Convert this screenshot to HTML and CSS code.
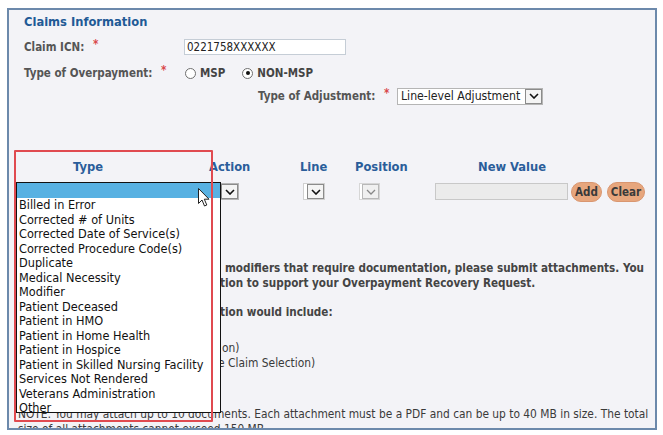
FILE: index.html
```html
<!DOCTYPE html>
<html>
<head>
<meta charset="utf-8">
<link rel="stylesheet" href="styles.css">
</head>
<body>
<div class="panel">
  <h2 class="section-title">Claims Information</h2>
  <div class="form-row r1">
    <span class="lbl w-icn">Claim ICN: <span class="req">*</span></span>
    <input class="text-in" type="text" value="0221758XXXXXX">
  </div>
  <div class="form-row r2">
    <span class="lbl w-ovp">Type of Overpayment: <span class="req">*</span></span>
    <span class="radio"><span class="circle"></span><span class="rlbl">MSP</span></span>
    <span class="radio"><span class="circle on"></span><span class="rlbl">NON-MSP</span></span>
  </div>
  <div class="form-row r3">
    <span class="lbl w-adj">Type of Adjustment: <span class="req">*</span></span>
    <span class="sel adj-sel"><span class="sel-text">Line-level Adjustment</span><span class="arrow"><svg viewBox="0 0 10 6" width="10" height="6"><path d="M1 1 L5 5 L9 1" fill="none" stroke="#111" stroke-width="1.6"/></svg></span></span>
  </div>

  <div class="lines">
    <div class="hdr c-type">Type</div>
    <div class="hdr c-action">Action</div>
    <div class="hdr c-line">Line</div>
    <div class="hdr c-pos">Position</div>
    <div class="hdr c-new">New Value</div>
    <div class="hdr"></div>

    <div class="cell"></div>
    <div class="cell"><span class="sel mini action-sel"><span class="arrow"><svg viewBox="0 0 10 6" width="10" height="6"><path d="M1 1 L5 5 L9 1" fill="none" stroke="#111" stroke-width="1.6"/></svg></span></span></div>
    <div class="cell"><span class="sel mini line-sel"><span class="arrow"><svg viewBox="0 0 10 6" width="10" height="6"><path d="M1 1 L5 5 L9 1" fill="none" stroke="#111" stroke-width="1.6"/></svg></span></span></div>
    <div class="cell"><span class="sel mini pos-sel dis"><span class="arrow"><svg viewBox="0 0 10 6" width="10" height="6"><path d="M1 1 L5 5 L9 1" fill="none" stroke="#888" stroke-width="1.3"/></svg></span></span></div>
    <div class="cell"><input class="new-in" type="text" disabled></div>
    <div class="cell btns"><button class="pill">Add</button><button class="pill">Clear</button></div>
  </div>

  <div class="info">
    <p class="bold"><span class="ln"><span class="pre p1">For line-level adjustments with</span>modifiers that require documentation, please submit attachments. You</span><span class="ln"><span class="pre p2">may attach additional documenta</span>tion to support your Overpayment Recovery Request.</span></p>
    <p class="bold"><span class="ln"><span class="pre p3">Examples of such documenta</span>tion would include:</span></p>
    <p class="list"><span class="ln"><span class="pre p4">- Medical records (Line Selecti</span>on)</span><span class="ln"><span class="pre p5">- Remittance Advice (Entir</span>e Claim Selection)</span></p>
    <p class="note">NOTE: You may attach up to 10 documents. Each attachment must be a PDF and can be up to 40 MB in size. The total<br>size of all attachments cannot exceed 150 MB.</p>
  </div>

  <div class="dropdown">
    <div class="opt sel-opt">&nbsp;</div>
    <div class="opt">Billed in Error</div>
    <div class="opt">Corrected # of Units</div>
    <div class="opt">Corrected Date of Service(s)</div>
    <div class="opt">Corrected Procedure Code(s)</div>
    <div class="opt">Duplicate</div>
    <div class="opt">Medical Necessity</div>
    <div class="opt">Modifier</div>
    <div class="opt">Patient Deceased</div>
    <div class="opt">Patient in HMO</div>
    <div class="opt">Patient in Home Health</div>
    <div class="opt">Patient in Hospice</div>
    <div class="opt">Patient in Skilled Nursing Facility</div>
    <div class="opt">Services Not Rendered</div>
    <div class="opt">Veterans Administration</div>
    <div class="opt">Other</div>
  </div>
  <div class="callout"></div>
  <svg class="pointer" viewBox="0 0 12 19" width="12" height="19"><path d="M0.5 0.5 L0.5 15.5 L4 12 L6.5 18 L8.8 17 L6.3 11.2 L11 11.2 Z" fill="#fff" stroke="#222" stroke-width="1" stroke-linejoin="round"/></svg>
</div>
</body>
</html>
```
FILE: styles.css
```css
html, body { margin: 0; padding: 0; background: #ffffff; }
body {
  font-family: "DejaVu Sans Condensed", "DejaVu Sans", sans-serif;
  font-size: 12px;
  color: #3a3a3a;
}
.panel {
  position: relative;
  box-sizing: border-box;
  margin: 8px 0 0 7px;
  width: 650px;
  height: 422px;
  border: 2px solid #6c89ab;
  background: #f3f3f7;
  padding: 4px 0 0 7px;
  overflow: hidden;
}
.section-title {
  margin: 0 0 4px 8px;
  font-size: 12.8px;
  line-height: 16px;
  font-weight: bold;
  color: #1f5a96;
}
.form-row {
  display: flex;
  align-items: center;
  height: 26px;
  padding-left: 8px;
}
.r3 { height: 20px; padding-left: 242px; }
.lbl { font-weight: bold; color: #555; font-size: 11.5px; }
.req { color: #d9484a; margin-left: 5px; position: relative; top: -3px; }
.w-icn { width: 160px; }
.w-ovp { width: 161px; }
.w-adj { width: 139px; }
.text-in {
  box-sizing: border-box;
  width: 162px;
  height: 16px;
  border: 1px solid #c5cdd6;
  background: #fff;
  font-family: "DejaVu Sans Condensed", sans-serif;
  font-size: 11.5px;
  color: #222;
  padding: 0 2px;
  margin: 0;
  outline: none;
}
.radio { display: inline-flex; align-items: center; margin-right: 17px; }
.circle {
  box-sizing: border-box;
  width: 11px; height: 11px;
  border: 1px solid #6f6f6f;
  border-radius: 50%;
  background: #fff;
  margin-right: 4px;
  position: relative;
}
.circle.on::after {
  content: "";
  position: absolute;
  left: 2.5px; top: 2.5px;
  width: 4px; height: 4px;
  border-radius: 50%;
  background: #111;
}
.rlbl { font-weight: bold; color: #444; font-size: 11.5px; }

.sel {
  box-sizing: border-box;
  display: inline-flex;
  align-items: stretch;
  height: 17px;
  border: 1px solid #b5b5b5;
  background: #fff;
}
.sel-text { padding: 0 1px 0 3px; line-height: 15px; color: #222; font-size: 12.2px; }
.arrow {
  box-sizing: border-box;
  width: 17px;
  border: 1px solid #8b8b8b;
  background: #f4f4f4;
  display: flex;
  align-items: center;
  justify-content: center;
}
.adj-sel { width: 146px; justify-content: space-between; }

.lines {
  display: grid;
  grid-template-columns: 184px 95px 55px 80px 140px auto;
  margin-top: 53px;
}
.hdr {
  font-weight: bold;
  font-size: 12.8px;
  color: #2a5d9a;
  line-height: 16px;
  height: 16px;
}
.c-type { text-align: center; width: 144px; }
.c-action { padding-left: 9px; }
.c-line { padding-left: 5px; }
.c-pos { padding-left: 5px; }
.c-new { padding-left: 48px; }
.cell { margin-top: 7px; height: 19px; display: flex; align-items: center; }
.mini { justify-content: flex-end; }
.action-sel { width: 39px; }
.line-sel { width: 22px; margin-left: 8px; border-color: #d0d0d0; }
.pos-sel { width: 21px; margin-left: 9px; border-color: #d6d6d6; }
.pos-sel .arrow { border-color: #b8b8b8; background: #f0f0f0; }
.new-in {
  box-sizing: border-box;
  width: 133px;
  height: 17px;
  margin: 0 0 0 5px;
  border: 1px solid #c8c8c8;
  background: #ebebeb;
}
.btns { gap: 5px; padding-left: 1px; }
.pill {
  box-sizing: border-box;
  height: 20px;
  padding: 0 3px;
  border: 1px solid #d99670;
  border-radius: 10px;
  background: #e7a67d;
  font-family: "DejaVu Sans Condensed", sans-serif;
  font-size: 11.5px;
  font-weight: bold;
  color: #3a3a3a;
}

.info { margin-top: 60px; padding-left: 2px; line-height: 15px; }
.info p { margin: 0 0 14px 0; white-space: nowrap; }
.info .ln { display: block; }
.info .pre { display: inline-block; vertical-align: top; white-space: nowrap; }
.info .p1 { width: 207px; }
.info .p2 { width: 202px; }
.info .p3 { width: 202px; }
.info .p4 { width: 204px; }
.info .p5 { width: 200px; }
.info .bold { font-weight: bold; color: #444; font-size: 11.6px; }
.info .list { margin-top: 21px; margin-bottom: 36px; color: #3a3a3a; font-size: 11.9px; }
.info .note { color: #3a3a3a; font-size: 11.85px; }

.dropdown {
  position: absolute;
  left: 7px;
  top: 172px;
  box-sizing: border-box;
  width: 205px;
  height: 231px;
  border: 1px solid #111;
  background: #fff;
  font-family: "DejaVu Sans Condensed", sans-serif;
  font-size: 12.6px;
  color: #111;
}
.opt { line-height: 14.5px; padding-left: 2px; white-space: nowrap; }
.sel-opt { background: #58b1e2; height: 15px; line-height: 15px; }
.callout {
  position: absolute;
  left: 5px;
  top: 140px;
  box-sizing: border-box;
  width: 199px;
  height: 272px;
  border: 2.5px solid #e04a50;
  border-radius: 1px;
}
.pointer { position: absolute; left: 189px; top: 178px; }
```
